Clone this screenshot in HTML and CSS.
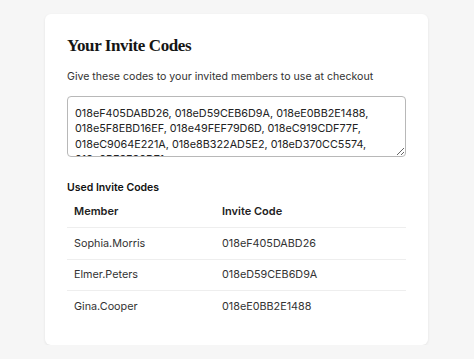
FILE: index.html
```html
<!DOCTYPE html>
<html>
<head>
<meta charset="utf-8">
<link rel="stylesheet" href="styles.css">
</head>
<body>
<div class="page">
  <div class="card">
    <h1 class="title">Your Invite Codes</h1>
    <p class="lead">Give these codes to your invited members to use at checkout</p>
    <textarea class="codes" readonly>018eF405DABD26, 018eD59CEB6D9A, 018eE0BB2E1488, 018e5F8EBD16EF, 018e49FEF79D6D, 018eC919CDF77F, 018eC9064E221A, 018e8B322AD5E2, 018eD370CC5574, 018e0BF3F30D71</textarea>
    <h2 class="subtitle">Used Invite Codes</h2>
    <table class="used">
      <thead>
        <tr><th>Member</th><th>Invite Code</th></tr>
      </thead>
      <tbody>
        <tr><td>Sophia.Morris</td><td>018eF405DABD26</td></tr>
        <tr><td>Elmer.Peters</td><td>018eD59CEB6D9A</td></tr>
        <tr><td>Gina.Cooper</td><td>018eE0BB2E1488</td></tr>
      </tbody>
    </table>
  </div>
</div>
</body>
</html>
```

FILE: styles.css
```css
html, body {
  margin: 0;
  padding: 0;
  background: #f6f6f6;
}
.page {
  padding: 14px 0 0 45px;
  font-family: Inter, "Noto Sans", sans-serif;
  color: #222;
}
.card {
  box-sizing: border-box;
  width: 383px;
  height: 331px;
  background: #fff;
  border-radius: 6px;
  box-shadow: 0 1px 3px rgba(0,0,0,0.08);
  padding: 20px 22px 0 22px;
}
.title {
  margin: 0;
  font-family: "Liberation Serif", serif;
  font-weight: bold;
  font-size: 17px;
  letter-spacing: -0.4px;
  line-height: 24px;
  color: #151515;
}
.lead {
  margin: 11px 0 0 0;
  font-size: 10.6px;
  line-height: 16px;
  color: #333;
}
.codes {
  display: block;
  box-sizing: border-box;
  margin-top: 11px;
  width: 339px;
  height: 61px;
  padding: 8.5px 7px 0 7px;
  border: 1px solid #b8b8b8;
  border-radius: 4px;
  font-family: Inter, "Noto Sans", sans-serif;
  font-size: 10.8px;
  line-height: 15.6px;
  color: #222;
  resize: vertical;
  overflow: hidden;
}
.subtitle {
  margin: 24px 0 0 0;
  font-size: 10.5px;
  line-height: 14px;
  font-weight: 600;
  color: #111;
}
.used {
  width: 339px;
  border-collapse: collapse;
  margin-top: 9px;
  font-size: 10.8px;
}
.used th {
  text-align: left;
  font-size: 11px;
  font-weight: 600;
  padding: 0 7px 9px 7px;
  line-height: 14px;
  border-bottom: 1px solid #eee;
}
.used td {
  padding: 0 7px;
  height: 30.5px;
  border-bottom: 1px solid #eee;
  color: #333;
}
.used tr:last-child td {
  border-bottom: none;
}
.used th:first-child, .used td:first-child {
  width: 134px;
}
```
